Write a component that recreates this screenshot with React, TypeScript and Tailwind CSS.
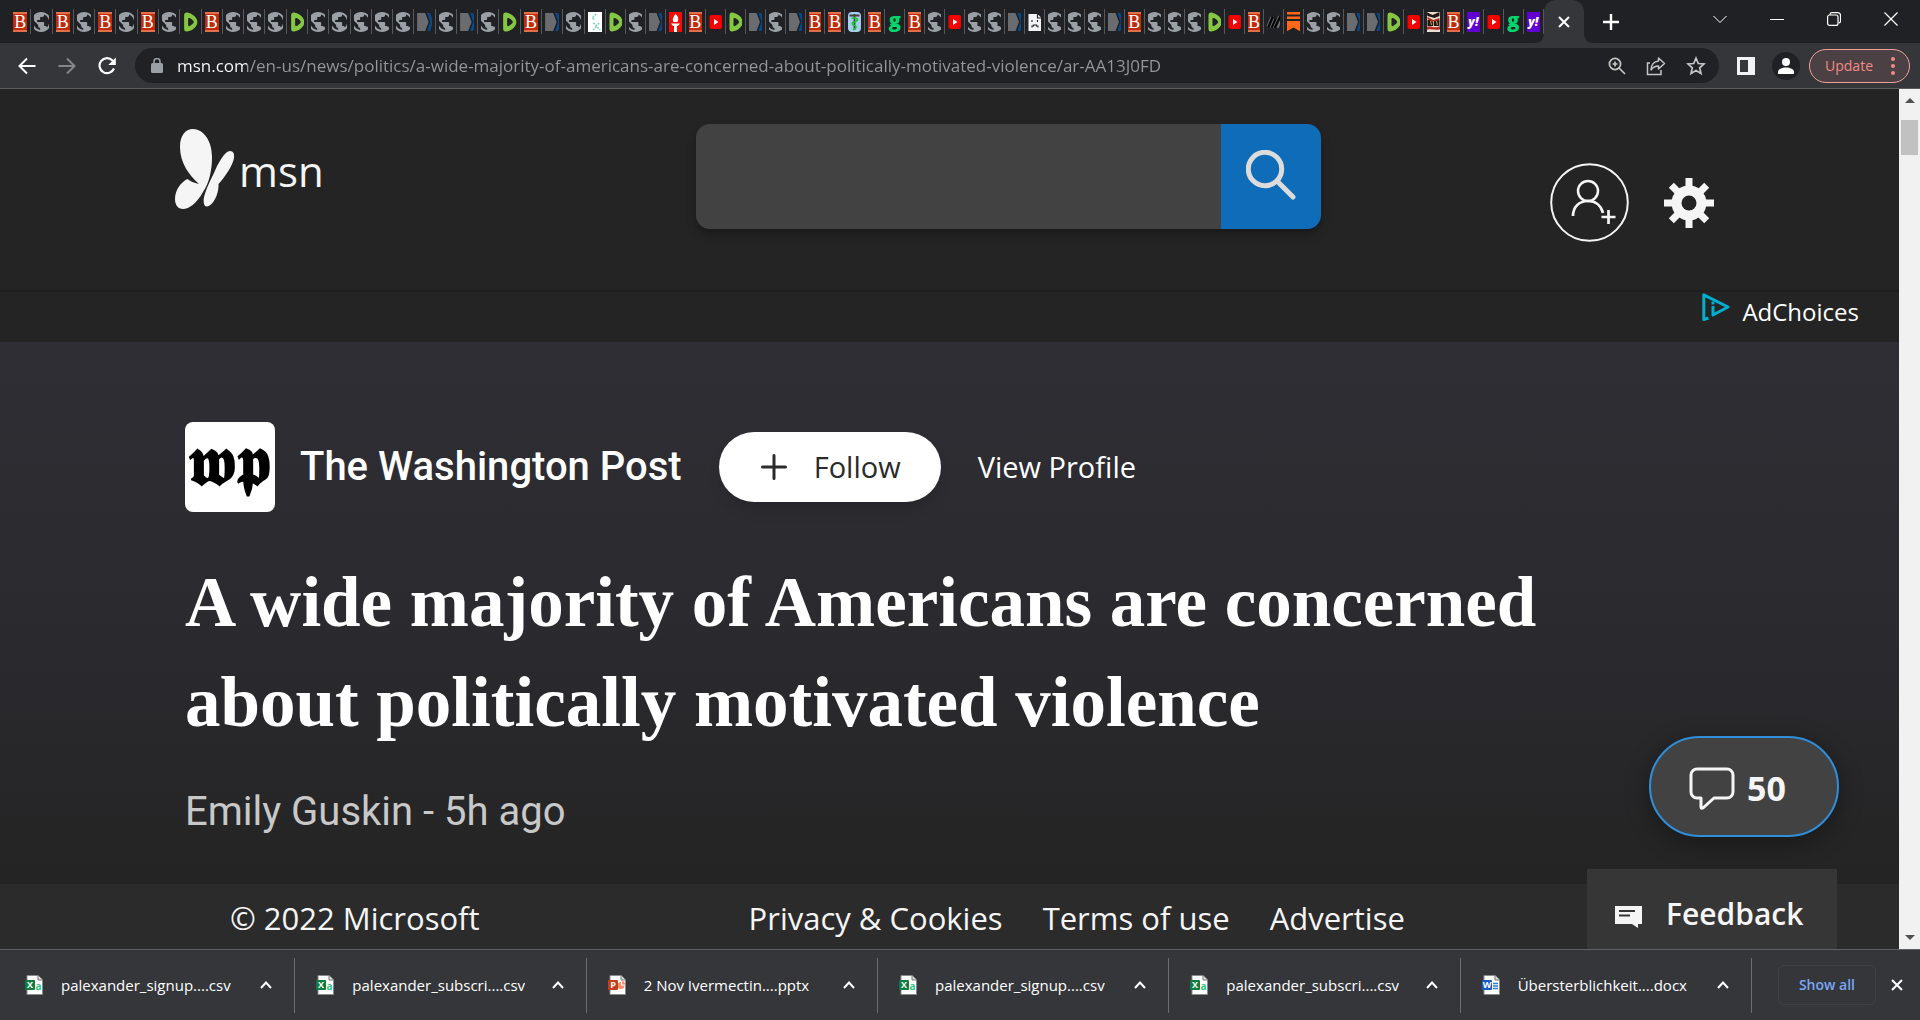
import React from "react";

type IconKind =
  | "bn"
  | "globe"
  | "rumble"
  | "arrow"
  | "dots"
  | "torch"
  | "yt"
  | "med"
  | "g"
  | "sad"
  | "script"
  | "stack"
  | "flag"
  | "yahoo";

const wideTabs: IconKind[] = [
  "bn", "globe", "bn", "globe", "bn", "globe", "bn", "globe", "rumble", "bn",
  "globe", "globe", "globe", "rumble", "globe", "globe", "globe", "globe",
  "globe", "arrow", "globe", "arrow", "globe", "rumble", "bn", "arrow",
  "globe", "dots",
];

const narrowTabs: IconKind[] = [
  "rumble", "globe", "arrow", "torch", "bn", "yt", "rumble", "arrow", "globe",
  "arrow", "bn", "bn", "med", "bn", "g", "bn", "globe", "yt", "globe",
  "globe", "arrow", "sad", "globe", "globe", "globe", "arrow", "bn", "globe",
  "globe", "globe", "rumble", "yt", "bn", "script", "stack", "globe", "globe",
  "arrow", "arrow", "rumble", "yt", "flag", "bn", "yahoo", "yt", "g", "yahoo",
];

const downloads = [
  { name: "palexander_signup....csv", kind: "excel" },
  { name: "palexander_subscri....csv", kind: "excel" },
  { name: "2 Nov Ivermectin....pptx", kind: "powerpoint" },
  { name: "palexander_signup....csv", kind: "excel" },
  { name: "palexander_subscri....csv", kind: "excel" },
  { name: "Übersterblichkeit....docx", kind: "word" },
];

const Favicon = ({ kind }: { kind: IconKind }) => {
  if (kind === "bn") {
    return (
      <span className="flex h-5 w-full items-center justify-center border-y-2 border-[#e0704a] bg-[#c02b0a] font-['Liberation_Serif',serif] text-lg leading-4 text-white">
        B
      </span>
    );
  }
  if (kind === "g") {
    return (
      <span className="flex h-5 w-full items-center justify-center pb-1 font-['Open_Sans',sans-serif] text-xl leading-5 font-extrabold text-[#00d66b]">
        g
      </span>
    );
  }
  if (kind === "yahoo") {
    return (
      <span className="flex h-5 w-full items-center justify-center bg-[#6001d2] font-['Open_Sans',sans-serif] text-xs leading-4 font-extrabold text-white italic">
        y!
      </span>
    );
  }
  if (kind === "globe") {
    return (
      <svg
        viewBox="2 2 20 20"
        preserveAspectRatio="xMidYMid slice"
        className="h-5 w-full"
        fill="#9aa0a6"
        aria-hidden="true"
      >
        <path d="M12 2C6.480 2 2 6.480 2 12s4.480 10 10 10 10-4.480 10-10S17.520 2 12 2zm-1 17.930c-3.950-.49-7-3.850-7-7.930 0-.62.08-1.210.21-1.790L9 15v1c0 1.100.9 2 2 2v1.930zm6.900-2.540c-.26-.81-1-1.390-1.900-1.390h-1v-3c0-.55-.45-1-1-1H8v-2h2c.55 0 1-.45 1-1V7h2c1.100 0 2-.9 2-2v-.41c2.930 1.190 5 4.060 5 7.410 0 2.080-.8 3.970-2.100 5.390z" />
      </svg>
    );
  }
  return (
    <svg
      viewBox="0 0 20 20"
      preserveAspectRatio="xMidYMid slice"
      className="h-5 w-full"
      aria-hidden="true"
    >
      {kind === "rumble" && (
        <>
          <path
            d="M4 3q0-3 3-2.500c5 1 9 4 10 8 .5 2 0 4-1 5.500-2 3-5 5-9 5.500q-3 .5-3-2.500z"
            fill="#85c742"
          />
          <path d="M8 7q0-1.500 1.500-1c2 .8 3 2 3.800 3q.8 1 0 2c-1 1.200-2 2-3.800 3Q8 14.500 8 13z" fill="#202124" />
        </>
      )}
      {kind === "arrow" && (
        <>
          <path d="M3 1h8l3.500 9-3.500 9H3z" fill="#6b6c70" />
          <path d="M13 1h3l3 9-3 9h-3l3-9z" fill="#07498a" />
        </>
      )}
      {kind === "dots" && (
        <>
          <path d="M0 0h20v20H0z" fill="#fff" />
          <path
            d="M11 2L7 6l3 2M8 11l4 3-4 4M14 11l-3 3 4 4"
            fill="none"
            stroke="#7ed6b8"
            strokeWidth="1.600"
            strokeDasharray="2 1"
          />
        </>
      )}
      {kind === "torch" && (
        <>
          <path d="M0 0h20v20H0z" fill="#f50a0a" />
          <path d="M10 2c3 3 3.500 5 2 8H8C6.500 7 8 5 10 2zM5.500 11.500h9l-2 2.500h-1v6h-3v-6h-1z" fill="#fff" />
        </>
      )}
      {kind === "yt" && (
        <>
          <rect x="4" y="3" width="12.500" height="14" rx="2" fill="#f60000" />
          <path d="M8.500 7l4.500 3-4.500 3z" fill="#fff" />
        </>
      )}
      {kind === "med" && (
        <>
          <rect x="3.500" width="13" height="20" rx="4" fill="#a9cdf0" />
          <path d="M10 2v16M5 3.500h10" stroke="#4a4136" strokeWidth="1.800" />
          <path
            d="M7 6c6 0 7 1 5 3s-5 1-4 3 4 1 3.500 3-2 2-3 3"
            fill="none"
            stroke="#12c92c"
            strokeWidth="1.700"
          />
        </>
      )}
      {kind === "sad" && (
        <>
          <path d="M4 2h9l4 4v13H4z" fill="#f1f3f4" />
          <path
            d="M7.500 8v2M13 8v2M7.500 15.500v-1.500H9v-1h3v1h1.500v1.500M13 2v4h4"
            fill="none"
            stroke="#202124"
            strokeWidth="1.100"
          />
        </>
      )}
      {kind === "script" && (
        <>
          <path d="M3.500 16L8 5M7 16l4-9M10 16L16 4M14 16l3-7" fill="none" stroke="#6d6e70" strokeWidth="2" />
          <path d="M4.500 16L9 5M8 16l4-9M11 16L17 4" fill="none" stroke="#050505" strokeWidth="2" />
        </>
      )}
      {kind === "stack" && (
        <path d="M3 0h14v2.500H3zM3 4.500h14V7H3zM3 9h14v10.500l-7-4-7 4z" fill="#ff6719" />
      )}
      {kind === "flag" && (
        <>
          <path d="M0 0h20v20H0z" fill="#e9ddd0" />
          <path d="M3 0l6 3 7-3v4l-5 2-7-2zM4 8h12v6H4z" fill="#1d1715" />
          <path d="M3 15c5-2 8 2 14-1v3c-5 2-9-1-14 1zM4 5l6 3 6-2v2l-7 2-5-3z" fill="#b62a20" />
          <path d="M7 9l1 4M10 9v5M13 9l1 4" stroke="#d7a55d" />
        </>
      )}
    </svg>
  );
};

const Tab = ({ kind }: { kind: IconKind }) => (
  <button
    type="button"
    aria-label={`${kind} tab`}
    className="flex h-[25px] min-w-0 flex-1 items-center border-r border-[#55575b] px-[3px]"
  >
    <Favicon kind={kind} />
  </button>
);

const TabStrip = () => (
  <div className="flex h-[43px] bg-[#202124] pl-[10px] text-white">
    <div className="flex min-w-0 flex-[596] items-center">
      {wideTabs.map((kind, i) => (
        <Tab key={i} kind={kind} />
      ))}
    </div>
    <div className="flex min-w-0 flex-[938] items-center">
      {narrowTabs.map((kind, i) => (
        <Tab key={i} kind={kind} />
      ))}
    </div>
    <div className="relative flex w-10 items-center justify-center rounded-t-xl bg-[#35363a]">
      <svg viewBox="0 0 60 10" className="absolute -left-[10px] bottom-0 h-[10px] w-[60px]" aria-hidden="true">
        <path d="M0 10Q10 10 10 0V10zM60 10Q50 10 50 0V10z" fill="#35363a" />
      </svg>
      <button type="button" aria-label="Close tab">
        <svg viewBox="0 0 12 12" className="size-3" stroke="currentColor" strokeWidth="2">
          <path d="M1 1l10 10M11 1L1 11" />
        </svg>
      </button>
    </div>
    <div className="flex w-[336px] items-center pl-[19px]">
      <button type="button" aria-label="New tab">
        <svg viewBox="0 0 16 16" className="size-4" stroke="currentColor" strokeWidth="2.400">
          <path d="M8 0v16M8 8h8M0 8h8" />
        </svg>
      </button>
      <div className="ml-auto flex items-center gap-[43px] pr-[22px] pb-[6px]">
        <button type="button" aria-label="Search tabs">
          <svg viewBox="0 0 14 14" className="size-[14px]" fill="none" stroke="currentColor">
            <path d="M.5 4L7 10.500 13.500 4" />
          </svg>
        </button>
        <button type="button" aria-label="Minimize">
          <svg viewBox="0 0 14 14" className="size-[14px]" stroke="currentColor">
            <path d="M0 7.500h14" />
          </svg>
        </button>
        <button type="button" aria-label="Restore">
          <svg viewBox="0 0 14 14" className="size-[14px]" fill="none" stroke="currentColor" strokeWidth="1.200">
            <rect x=".6" y="3" width="10.400" height="10.400" rx="2" />
            <path d="M3 3V2.500A2 2 0 015 .6h5.500a3 3 0 013 3V9a2 2 0 01-2 2" />
          </svg>
        </button>
        <button type="button" aria-label="Close window">
          <svg viewBox="0 0 14 14" className="size-[14px]" stroke="currentColor" strokeWidth="1.200">
            <path d="M.5 .5l13 13M13.500 .5l-13 13" />
          </svg>
        </button>
      </div>
    </div>
  </div>
);

const Toolbar = () => (
  <div className="flex h-[46px] items-center border-b border-[#5b5c60] bg-[#35363a] pr-[10px] pl-[18px] text-white">
    <div className="flex items-center gap-[22px]">
      <button type="button" aria-label="Back">
        <svg viewBox="0 0 18 18" className="size-[18px]" fill="none" stroke="currentColor" strokeWidth="2">
          <path d="M17.500 9H2M9 1.500L1.500 9 9 16.500" />
        </svg>
      </button>
      <button type="button" aria-label="Forward" className="text-[#85868a]">
        <svg viewBox="0 0 18 18" className="size-[18px]" fill="none" stroke="currentColor" strokeWidth="2">
          <path d="M.5 9H16M9 1.500L16.500 9 9 16.500" />
        </svg>
      </button>
      <button type="button" aria-label="Reload">
        <svg viewBox="0 0 18 18" className="size-[18px]" fill="none" stroke="currentColor" strokeWidth="2.200">
          <path d="M16 11.500A7.500 7.500 0 1114.500 3.500L16.500 6" />
          <path d="M17.800 .5v7.500h-7.500z" fill="currentColor" stroke="none" />
        </svg>
      </button>
    </div>
    <div className="ml-[19px] flex h-[35px] min-w-0 flex-1 items-center rounded-full bg-[#202124] pr-[13px] pl-4">
      <svg viewBox="0 0 12 15" className="h-[15px] w-3 shrink-0" aria-hidden="true">
        <rect y="5" width="12" height="10" rx="1.500" fill="#9aa0a6" />
        <path d="M3 6V3.500a3 3 0 016 0V6" fill="none" stroke="#9aa0a6" strokeWidth="1.600" />
      </svg>
      <input
        type="text"
        aria-label="Address"
        defaultValue="msn.com/en-us/news/politics/a-wide-majority-of-americans-are-concerned-about-politically-motivated-violence/ar-AA13J0FD"
        className="mx-[14px] min-w-0 flex-1 bg-[linear-gradient(90deg,#ffffff_70px,#94979b_70px)] bg-clip-text text-[17px] text-transparent outline-none"
      />
      <div className="flex items-center gap-5 text-[#c4c7c5]">
        <button type="button" aria-label="Zoom">
          <svg viewBox="0 0 18 18" className="size-[18px]" fill="none" stroke="currentColor" strokeWidth="1.700">
            <circle cx="7" cy="7" r="5.600" />
            <path d="M11 11l6 6M7 4.500v5M4.500 7h5" />
          </svg>
        </button>
        <button type="button" aria-label="Share">
          <svg viewBox="0 0 20 20" className="size-5" fill="none" stroke="currentColor" strokeWidth="1.500">
            <path d="M4 7H1.500v11.500H15V14" />
            <path d="M12.500 2l6 5.500-6 5.500V10C9 10 7 11 5 14c0-5 3-8.500 7.500-9z" strokeLinejoin="round" />
          </svg>
        </button>
        <button type="button" aria-label="Bookmark">
          <svg viewBox="0 0 20 20" className="size-5" fill="none" stroke="currentColor" strokeWidth="1.700">
            <path d="M10 2.200l2.300 5.300 5.700.5-4.300 3.800 1.300 5.700-5-3-5 3 1.300-5.700L2 8l5.700-.5z" />
          </svg>
        </button>
      </div>
    </div>
    <button type="button" aria-label="Side panel" className="ml-[18px]">
      <svg viewBox="0 0 18 18" className="size-[18px]" aria-hidden="true">
        <path d="M0 0h18v18H0z" fill="#f1f3f4" />
        <path d="M3 3h8v12H3z" fill="#35363a" />
      </svg>
    </button>
    <button type="button" aria-label="Profile" className="ml-[17px] rounded-full bg-[#202124] p-[6px]">
      <svg viewBox="0 0 16 16" className="size-4" fill="currentColor">
        <circle cx="8" cy="4" r="4" />
        <path d="M0 16v-2c0-3 4-4.500 8-4.500s8 1.500 8 4.500v2z" />
      </svg>
    </button>
    <button
      type="button"
      className="ml-[9px] flex h-[34px] items-center gap-[18px] rounded-full border border-[#f2a29b] bg-[#4b4043] pr-[14px] pl-[15px] text-sm text-[#f28b82]"
    >
      Update
      <svg viewBox="0 0 4 18" className="h-[18px] w-1" fill="currentColor">
        <circle cx="2" cy="2" r="2" />
        <circle cx="2" cy="9" r="2" />
        <circle cx="2" cy="16" r="2" />
      </svg>
    </button>
  </div>
);

const Header = () => (
  <header className="flex h-[201px] items-start bg-[#242424] pt-[35px] pr-[185px] pl-[175px]">
    <a href="#" className="mt-[5px] flex h-20 items-center gap-1 text-[#f5f5f5]">
      <svg viewBox="0 0 60 80" className="h-20 w-[60px]" fill="currentColor" aria-hidden="true">
        <path d="M18 0C28 0 37 11 37 28C37 42 34 54 28 63C22 74 14 80 8 80C3 80 0 76 0 70C0 61 6 53 12.500 50C15 52 19 54 24 55C14 46 5 34 5 18C5 7 10 0 18 0Z" />
        <path d="M55 22C58.500 22 59.500 25 59 29C58 36 50 48 43.500 55C44 65 38 77 32 77.500C29 77.500 28.500 74 28.700 70C30 62 36 50 39 44C43 34 50 22 55 22Z" />
      </svg>
      <span className="pt-1 text-[42px] leading-none">msn</span>
    </a>
    <form className="ml-[372px] flex h-[105px] max-w-[625px] flex-1 overflow-hidden rounded-[14px] shadow-[0_5px_10px_rgba(0,0,0,0.3)]">
      <input
        type="text"
        aria-label="Search the web"
        className="min-w-0 flex-1 bg-[#424242] px-6 text-3xl text-white outline-none"
      />
      <button
        type="button"
        aria-label="Search"
        className="flex w-[100px] items-center justify-center bg-[#0f6cb9] pb-[3px] text-[#dcdcdc]"
      >
        <svg viewBox="0 0 50 50" className="size-[50px]" fill="none" stroke="currentColor" strokeWidth="5">
          <circle cx="19" cy="19" r="16.700" />
          <path d="M31 31l16 16" strokeLinecap="round" />
        </svg>
      </button>
    </form>
    <div className="mt-[39px] ml-auto flex items-center gap-[35px] text-[#f5f5f5]">
      <button type="button" aria-label="Sign in">
        <svg viewBox="0 0 79 79" className="size-[79px]" fill="none" stroke="currentColor" strokeWidth="2">
          <circle cx="39.500" cy="39.500" r="38.300" />
          <circle cx="38" cy="28" r="10" strokeWidth="2.500" />
          <path d="M23 53c0-9 6-15 15-15 7 0 13 4 15 12" strokeWidth="2.700" />
          <path d="M58.500 47v14M51.500 54h14" strokeWidth="2.700" />
        </svg>
      </button>
      <button type="button" aria-label="Settings">
        <svg viewBox="0 0 50 50" className="size-[50px]" aria-hidden="true">
          <path
            d="M21.500 0h7v50h-7zM0 21.500h50v7H0zM4.800 9.800l5-5 35.400 35.400-5 5zM40.200 4.800l5 5L9.800 45.200l-5-5z"
            fill="currentColor"
          />
          <circle cx="25" cy="25" r="17.500" fill="currentColor" />
          <circle cx="25" cy="25" r="7.500" fill="#242424" />
        </svg>
      </button>
    </div>
  </header>
);

const AdChoices = () => (
  <div className="flex h-[52px] justify-end border-t-2 border-[#1e1e1e] bg-[#242424] pr-10">
    <a href="#" className="flex h-10 items-start gap-3 text-white">
      <svg viewBox="0 0 28 28" className="mt-px size-7" fill="none" stroke="#00aecd" strokeWidth="3" aria-hidden="true">
        <path d="M6.500 25L1.800 26.500V1.800L26 14 11 22V13" strokeLinejoin="round" />
        <path d="M11 8.500v3" />
      </svg>
      <span className="text-2xl leading-10">AdChoices</span>
    </a>
  </div>
);

const Article = () => (
  <article className="flex-1 bg-[linear-gradient(180deg,#2e2e34_0%,#2b2a2f_50%,#242424_100%)] px-[185px] pt-20 text-white">
    <div className="flex h-[90px] items-center">
      <div className="flex size-[90px] items-center justify-center rounded-lg bg-white pb-4 text-[68px] leading-none font-bold text-black">
        𝖜𝖕
      </div>
      <span className="ml-[25px] font-['Roboto',sans-serif] text-[40px] leading-none font-medium">
        The Washington Post
      </span>
      <button
        type="button"
        className="ml-[37px] flex h-[70px] items-center gap-[27px] rounded-full bg-white pr-10 pl-[42px] text-[29px] text-[#2b2b2b] shadow-lg"
      >
        <svg viewBox="0 0 26 26" className="size-[26px]" stroke="currentColor" strokeWidth="3" strokeLinecap="round">
          <path d="M13 1.500v23M1.500 13h23" />
        </svg>
        Follow
      </button>
      <a href="#" className="ml-[37px] text-[29px]">
        View Profile
      </a>
    </div>
    <h1 className="mt-10 max-w-[1400px] font-['Liberation_Serif',serif] text-[71px] leading-[100px] font-bold">
      A wide majority of Americans are concerned about politically motivated violence
    </h1>
    <p className="mt-[35px] font-['Roboto',sans-serif] text-[40px] leading-[50px] text-[#c8c8c8]">
      Emily Guskin - 5h ago
    </p>
  </article>
);

const Footer = () => (
  <footer className="flex h-[65px] items-center bg-[#2b2b2b] pt-1 pl-[230px] text-[31px] text-[#f5f5f5]">
    <span>© 2022 Microsoft</span>
    <nav className="ml-[269px] flex gap-10">
      <a href="#">Privacy &amp; Cookies</a>
      <a href="#">Terms of use</a>
      <a href="#">Advertise</a>
    </nav>
  </footer>
);

const Scrollbar = () => (
  <div className="flex w-[21px] shrink-0 flex-col items-center bg-[#f1f1f1] py-[9px]">
    <svg viewBox="0 0 10 5" className="h-[5px] w-[10px]" fill="#505050" aria-hidden="true">
      <path d="M5 0l5 5H0z" />
    </svg>
    <div className="mt-[17px] h-[35px] w-[17px] bg-[#c1c1c1]" />
    <svg viewBox="0 0 10 5" className="mt-auto h-[5px] w-[10px]" fill="#505050" aria-hidden="true">
      <path d="M5 5l5-5H0z" />
    </svg>
  </div>
);

const FileIcon = ({ kind }: { kind: string }) => {
  const color = kind === "excel" ? "#107c41" : kind === "word" ? "#185abd" : "#c43e1c";
  const letter = kind === "excel" ? "X" : kind === "word" ? "W" : "P";
  return (
    <svg viewBox="0 0 18 20" className="h-5 w-[18px] shrink-0" aria-hidden="true">
      <path d="M2 .5h11l4.500 4.500v14.500H2z" fill="#fff" stroke="#8a8a8a" />
      <path d="M13 .5V5h4.500" fill="#ddd" stroke="#777" />
      {kind === "excel" && (
        <text x="10.500" y="14.500" fontSize="10" fontWeight="700" fill="#33c481">
          a
        </text>
      )}
      {kind === "word" && <path d="M11 8.500h5M11 11h5M11 13.500h5" stroke="#2b7cd3" strokeWidth="1.300" />}
      {kind === "powerpoint" && <path d="M13 7a3.500 3.500 0 103.500 3.500H13zM14 6v3.500h3A3 3 0 0014 6z" fill="#ff8f6b" />}
      <rect y="5" width="10" height="10" rx="1" fill={color} />
      <text x="5" y="13" fontSize="9" fontWeight="700" fill="#fff" textAnchor="middle">
        {letter}
      </text>
    </svg>
  );
};

const Downloads = () => (
  <div className="flex h-[71px] items-center border-t border-[#5f6064] bg-[#35363a] pl-1 text-white">
    {downloads.map((file, i) => (
      <div
        key={i}
        className="flex h-[55px] min-w-0 flex-1 items-center border-r border-[#6b6c70] pr-[22px] pl-[21px]"
      >
        <FileIcon kind={file.kind} />
        <span className="ml-[18px] truncate text-[15px]">{file.name}</span>
        <button type="button" aria-label={`Options for ${file.name}`} className="ml-auto">
          <svg viewBox="0 0 12 12" className="size-3" fill="none" stroke="currentColor" strokeWidth="2">
            <path d="M1 9l5-5.500L11 9" />
          </svg>
        </button>
      </div>
    ))}
    <button
      type="button"
      className="ml-[26px] h-10 w-[98px] rounded-md border border-[#3f4045] text-sm font-semibold text-[#7ba6f4]"
    >
      Show all
    </button>
    <button type="button" aria-label="Close downloads" className="mr-[17px] ml-[15px]">
      <svg viewBox="0 0 12 12" className="size-3" stroke="currentColor" strokeWidth="2">
        <path d="M1 1l10 10M11 1L1 11" />
      </svg>
    </button>
  </div>
);

const App = () => {
  return (
    <div className="flex min-h-screen flex-col bg-[#242424] font-['Open_Sans',sans-serif]">
      <TabStrip />
      <Toolbar />
      <div className="flex flex-1">
        <main className="relative flex min-w-0 flex-1 flex-col">
          <Header />
          <AdChoices />
          <Article />
          <Footer />
          <button
            type="button"
            className="absolute right-[60px] bottom-[112px] flex h-[101px] w-[190px] items-center gap-3 rounded-full border-2 border-[#2f8fdc] bg-[#424242] pt-1 pl-[38px] text-[34px] font-bold text-[#f5f5f5] shadow-[0_6px_24px_rgba(0,0,0,0.35)]"
          >
            <svg viewBox="0 0 46 43" className="h-[43px] w-[46px]" fill="none" stroke="currentColor" strokeWidth="3">
              <path
                d="M8 2h30a6 6 0 016 6v17a6 6 0 01-6 6H25L14 41q-2 1-2-1v-9H8a6 6 0 01-6-6V8a6 6 0 016-6z"
                strokeLinejoin="round"
              />
            </svg>
            50
          </button>
          <button
            type="button"
            className="absolute right-[62px] bottom-0 flex h-20 w-[250px] items-center gap-6 bg-[#363636] pt-2 pl-7 text-[30px] font-semibold text-[#f5f5f5]"
          >
            <svg viewBox="0 0 27 22" className="mt-2 h-[22px] w-[27px]" aria-hidden="true">
              <path d="M0 0h27v18h-4v4l-6-4H0z" fill="#f5f5f5" />
              <path d="M4 5h16M4 9.500h11" stroke="#363636" strokeWidth="2" />
            </svg>
            Feedback
          </button>
        </main>
        <Scrollbar />
      </div>
      <Downloads />
    </div>
  );
};

export default App;
